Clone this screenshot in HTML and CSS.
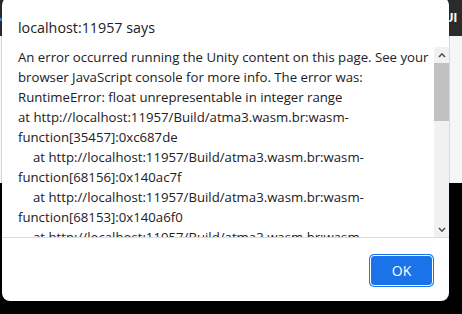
FILE: index.html
```html
<!DOCTYPE html>
<html>
<head>
<meta charset="utf-8">
<link rel="stylesheet" href="styles.css">
</head>
<body>
<div class="page">
  <div class="topbar"><span class="mark"></span><span class="brand">GUI</span></div>
  <div class="light"></div>
  <div class="dark"></div>
</div>
<div class="dialog">
  <div class="header">localhost:11957 says</div>
  <div class="body">
    <div class="text">
      <div class="ln">An error occurred running the Unity content on this page. See your</div>
      <div class="ln">browser JavaScript console for more info. The error was:</div>
      <div class="ln">RuntimeError: float unrepresentable in integer range</div>
      <div class="ln">at http://localhost:11957/Build/atma3.wasm.br:wasm-</div>
      <div class="ln">function[35457]:0xc687de</div>
      <div class="ln ind">at http://localhost:11957/Build/atma3.wasm.br:wasm-</div>
      <div class="ln">function[68156]:0x140ac7f</div>
      <div class="ln ind">at http://localhost:11957/Build/atma3.wasm.br:wasm-</div>
      <div class="ln">function[68153]:0x140a6f0</div>
      <div class="ln ind">at http://localhost:11957/Build/atma3.wasm.br:wasm-</div>
    </div>
    <div class="scrollbar">
      <div class="sb-btn"><svg width="8" height="6" viewBox="0 0 8 6"><path d="M1 5 L4 1.8 L7 5" fill="none" stroke="#505050" stroke-width="1.6"/></svg></div>
      <div class="sb-track"><div class="sb-thumb"></div></div>
      <div class="sb-btn"><svg width="8" height="6" viewBox="0 0 8 6"><path d="M1 1 L4 4.2 L7 1" fill="none" stroke="#505050" stroke-width="1.6"/></svg></div>
    </div>
  </div>
  <div class="footer"><button class="ok">OK</button></div>
</div>
</body>
</html>
```

FILE: styles.css
```css
html, body {
  margin: 0;
  padding: 0;
  background: #000;
  overflow: hidden;
}
.page {
  width: 462px;
  height: 314px;
  display: flex;
  flex-direction: column;
}
.topbar {
  height: 36px;
  background: #2b2b2b;
  display: flex;
  align-items: center;
  justify-content: space-between;
  padding-right: 5px;
}
.mark {
  width: 2px;
  height: 3px;
  background: #3d7be0;
  margin-top: 3px;
}
.brand {
  color: #fff;
  font-family: "Liberation Sans", sans-serif;
  font-size: 13px;
  font-weight: bold;
  margin-top: -2px;
}
.light {
  height: 147px;
  background: #f6f6f6;
}
.dark {
  flex: 1;
  background: #000;
}
.dialog {
  position: absolute;
  left: 2px;
  top: -3px;
  width: 447px;
  background: #fff;
  border-radius: 8px;
  box-shadow: 0 0 0 1px rgba(0, 0, 0, 0.12);
  font-family: "Segoe UI", "Open Sans", sans-serif;
  color: #202124;
  overflow: hidden;
}
.header {
  padding: 21px 16px 9px;
  font-size: 14.3px;
  line-height: 20px;
}
.body {
  display: flex;
  height: 190px;
  border-bottom: 1px solid #dadce0;
}
.text {
  flex: 1;
  padding-left: 16px;
  overflow: hidden;
  font-size: 13.2px;
  line-height: 20px;
  white-space: nowrap;
}
.ind {
  padding-left: 15px;
}
.scrollbar {
  width: 15px;
  background: #f1f1f1;
  display: flex;
  flex-direction: column;
}
.sb-btn {
  height: 15px;
  display: flex;
  align-items: center;
  justify-content: center;
}
.sb-track {
  flex: 1;
  padding-top: 1px;
}
.sb-thumb {
  height: 58px;
  background: #c1c1c1;
}
.footer {
  display: flex;
  justify-content: flex-end;
  padding: 17px 16px 15px;
}
.ok {
  width: 63px;
  height: 31px;
  background: #1a73e8;
  border: 1px solid #fff;
  border-radius: 4px;
  box-shadow: 0 0 0 1px #1a73e8;
  color: #fff;
  font-family: "Segoe UI", "Open Sans", sans-serif;
  font-size: 14px;
  padding: 0;
}
```
